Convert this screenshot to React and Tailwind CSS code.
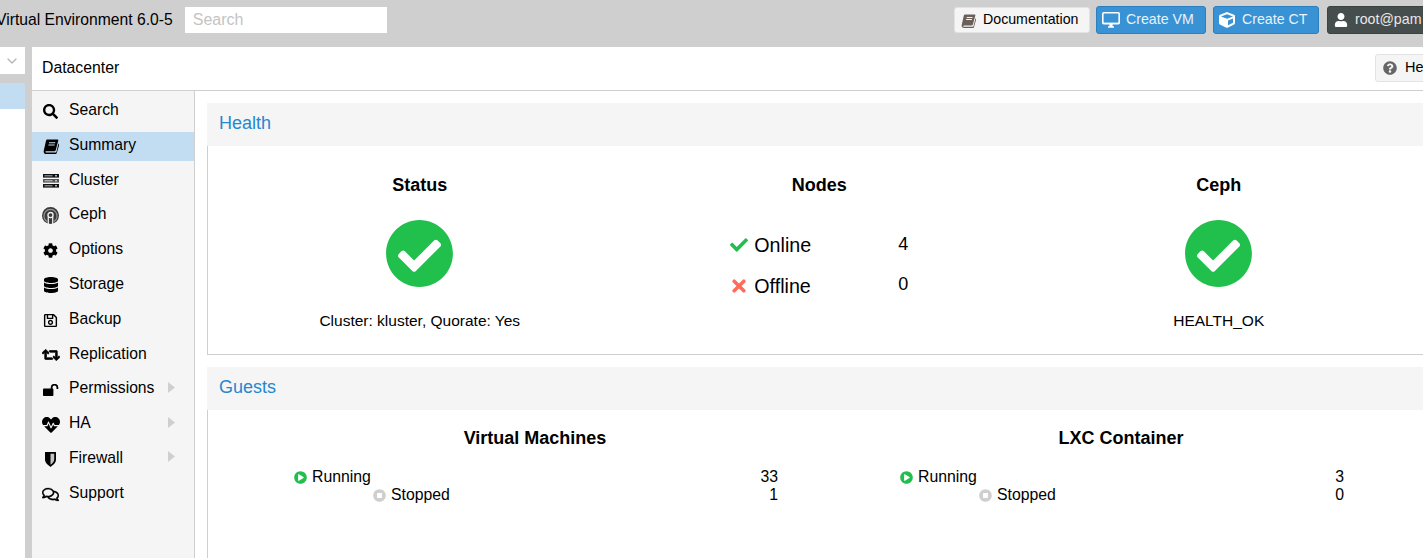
import { ChevronDown } from "lucide-react";
import {
  FaSearch,
  FaCog,
  FaDatabase,
  FaRegSave,
  FaRetweet,
  FaHeartbeat,
  FaRegComments,
  FaCheckCircle,
  FaCheck,
  FaPlayCircle,
  FaStopCircle,
  FaCube,
  FaUser,
  FaQuestionCircle,
} from "react-icons/fa";

function BookIcon({ className, page = "#f5f5f5" }) {
  return (
    <svg viewBox="0 0 16 16" className={className} fill="currentColor">
      <path d="M4.2 1.5h10.3c.7 0 1 .5.8 1.1l-2.6 9.6c-.2.7-.7 1-1.4 1H3.2c-.6 0-.9.4-.8.8.1.4.5.6 1 .6h9.3c.3 0 .5-.2.6-.4l2.2-8.6.5.4c.2.2.2.5.2.8l-2.4 8.3c-.2.6-.7.9-1.3.9H3.2C1.8 16 .6 15 .7 13.5c0-.3 0-.6.1-.9L3 2.7c.2-.7.6-1.2 1.2-1.2z" />
      <path d="M6.2 4.2h6.2l-.3 1H5.9zM5.6 6.4h6.2l-.3 1H5.3z" fill={page} />
    </svg>
  );
}

function ClusterIcon({ className }) {
  return (
    <svg viewBox="0 0 16 14" className={className}>
      <rect x="0" y="0" width="16" height="3.6" fill="#111" />
      <rect x="0" y="5" width="16" height="3.6" fill="#555" />
      <rect x="0" y="10" width="16" height="3.6" fill="#111" />
      <rect x="1.5" y="1.2" width="8" height="1.2" fill="#999" />
      <rect x="1.5" y="6.2" width="8" height="1.2" fill="#bbb" />
      <rect x="1.5" y="11.2" width="8" height="1.2" fill="#999" />
      <rect x="12" y="1.2" width="2" height="1.2" fill="#ddd" />
      <rect x="12" y="6.2" width="2" height="1.2" fill="#ddd" />
      <rect x="12" y="11.2" width="2" height="1.2" fill="#ddd" />
    </svg>
  );
}

function CephIcon({ className }) {
  return (
    <svg viewBox="0 0 16 16" className={className} fill="none">
      <circle cx="8" cy="8" r="8" fill="#3a3a3a" />
      <path d="M4.6 13.6A6.2 6.2 0 1 1 11.4 13.6" stroke="#9a9a9a" strokeWidth="1" />
      <circle cx="8" cy="7.6" r="2.4" stroke="#f0f0f0" strokeWidth="1.3" />
      <path d="M5.9 9.5V16M10.1 9.5V16" stroke="#f0f0f0" strokeWidth="1.2" />
    </svg>
  );
}

function DesktopIcon({ className }) {
  return (
    <svg viewBox="0 0 18 16" className={className} fill="none">
      <rect x="0.8" y="0.8" width="16.4" height="11" rx="1" stroke="white" strokeWidth="1.6" />
      <path d="M0.8 10.6h16.4v1.2H0.8z" fill="white" />
      <path d="M6 14.2h6v1.6H6z M7.4 12h3.2v2.4H7.4z" fill="white" />
    </svg>
  );
}

function UnlockIcon({ className }) {
  return (
    <svg viewBox="0 0 16 12" className={className} fill="none">
      <rect x="0" y="4.6" width="10.4" height="7.4" rx="0.8" fill="black" />
      <path d="M8.6 5V3.6a2.9 2.9 0 0 1 5.8 0V5" stroke="black" strokeWidth="1.8" />
    </svg>
  );
}

function ShieldIcon({ className }) {
  return (
    <svg viewBox="0 0 11 15" className={className}>
      <path d="M.4 0h10.2c.2 0 .4.2.4.4v7.2c0 3.4-3.4 5.9-5.5 7.4C3.4 13.5 0 11 0 7.6V.4C0 .2.2 0 .4 0z" fill="black" />
      <path d="M5.5 1.8h3.7v5.8c0 2.3-2 4-3.7 5.2z" fill="#c4c4c4" />
    </svg>
  );
}

function CrossIcon({ className }) {
  return (
    <svg viewBox="0 0 14 14" className={className} fill="none">
      <path d="M2.2 2.2l9.6 9.6M11.8 2.2l-9.6 9.6" stroke="#ff6c59" strokeWidth="3.6" strokeLinecap="round" />
    </svg>
  );
}

function Caret() {
  return (
    <svg viewBox="0 0 7 11" className="h-[11px] w-[7px]">
      <polygon points="0,0 7,5.5 0,11" fill="#cfcfcf" />
    </svg>
  );
}

const navItems = [
  { label: "Search", icon: <FaSearch className="size-[15px]" /> },
  { label: "Summary", icon: <BookIcon className="size-[16px]" page="#c2ddf2" />, active: true },
  { label: "Cluster", icon: <ClusterIcon className="h-[14px] w-[16px]" /> },
  { label: "Ceph", icon: <CephIcon className="size-[17px]" /> },
  { label: "Options", icon: <FaCog className="size-[15px]" /> },
  { label: "Storage", icon: <FaDatabase className="h-[16px] w-[14px]" /> },
  { label: "Backup", icon: <FaRegSave className="size-[15px]" /> },
  { label: "Replication", icon: <FaRetweet className="size-[18px]" stroke="currentColor" strokeWidth="24" /> },
  { label: "Permissions", icon: <UnlockIcon className="h-[12px] w-[16px]" />, more: true },
  { label: "HA", icon: <FaHeartbeat className="size-[18px]" />, more: true },
  { label: "Firewall", icon: <ShieldIcon className="h-[15px] w-[11px]" />, more: true },
  { label: "Support", icon: <FaRegComments className="size-[17px]" stroke="currentColor" strokeWidth="8" /> },
];

function NavRow({ item }) {
  return (
    <div className={`relative flex h-[29px] items-center ${item.active ? "bg-[#c2ddf2]" : ""}`}>
      <span className="flex w-[37px] shrink-0 justify-center text-black">{item.icon}</span>
      <span className="pb-[3px] text-[15.7px] leading-[20px] text-black">{item.label}</span>
      {item.more && (
        <span className="ml-auto mr-[19px] flex pb-[5px]">
          <Caret />
        </span>
      )}
    </div>
  );
}

function PanelHeader({ title }) {
  return (
    <div className="flex h-[43px] items-center bg-[#f5f5f5] pb-[2px] pl-[12px] text-[18px] text-[#2687cf]">{title}</div>
  );
}

function GuestRow({ label, count, icon, indent }) {
  return (
    <div className="flex h-[18px] items-center text-[15.8px] leading-[18px] text-black">
      <span className={`flex items-center gap-[5px] ${indent ? "pl-[79px]" : ""}`}>
        {icon}
        {label}
      </span>
      <span className="ml-auto">{count}</span>
    </div>
  );
}

function GuestColumn({ title, rowClass, running, stopped }) {
  return (
    <div className="w-[586px] shrink-0">
      <h3 className="text-center text-[18px] font-bold leading-[22px] text-black">{title}</h3>
      <div className={`mt-[19px] ${rowClass}`}>
        <GuestRow label="Running" count={running} icon={<FaPlayCircle className="size-[13px] text-[#21bf4b]" />} />
        <GuestRow label="Stopped" count={stopped} indent icon={<FaStopCircle className="size-[13px] text-[#cfcfcf]" />} />
      </div>
    </div>
  );
}

export default function App() {
  return (
    <div className="flex h-[558px] w-[1423px] flex-col overflow-hidden bg-[#cfcfcf] font-['Liberation_Sans',Arial,sans-serif]">
      {/* top bar */}
      <div className="flex h-[47px] shrink-0 items-start">
        <span className="ml-[-4px] mt-[10px] whitespace-nowrap text-[15.7px] leading-[20px] text-black">
          Virtual Environment 6.0-5
        </span>
        <div className="ml-[12px] mt-[7px] flex h-[26px] w-[202px] items-center bg-white pl-[8px] text-[16px] text-[#c4c4c4]">
          Search
        </div>
        <div className="ml-auto mr-[-30px] mt-[6px] flex items-start">
          <button className="mt-[1px] flex h-[26px] w-[136px] items-center rounded-[3px] border border-[#e3e3e3] bg-[#f5f5f5] pl-[6px] text-[14.2px] text-black">
            <BookIcon className="size-[15px] text-[#6b5f5a]" />
            <span className="ml-[7px]">Documentation</span>
          </button>
          <button className="ml-[6px] flex h-[28px] w-[110px] items-center rounded-[3px] border border-[#2a7fc0] bg-[#3892d4] pl-[5px] text-[14.2px] text-[#e8f2fa]">
            <DesktopIcon className="h-[16px] w-[18px]" />
            <span className="ml-[6px]">Create VM</span>
          </button>
          <button className="ml-[7px] flex h-[28px] w-[106px] items-center rounded-[3px] border border-[#2a7fc0] bg-[#3892d4] pl-[5px] text-[14.2px] text-[#e8f2fa]">
            <FaCube className="size-[16px] text-white" />
            <span className="ml-[7px]">Create CT</span>
          </button>
          <button className="ml-[8px] flex h-[28px] w-[126px] items-center rounded-[3px] border border-[#3c4242] bg-[#464d4d] pl-[6px] text-[14.2px] text-[#e8e8e8]">
            <FaUser className="size-[14px] text-white" />
            <span className="ml-[7px]">root@pam</span>
          </button>
        </div>
      </div>

      <div className="flex min-h-0 flex-1">
        {/* resource tree */}
        <div className="flex w-[25px] shrink-0 flex-col">
          <div className="flex h-[27px] items-center justify-end bg-white pr-[5px]">
            <ChevronDown className="size-[16px] text-[#b5b5b5]" />
          </div>
          <div className="mt-[9px] flex-1 bg-white">
            <div className="h-[26px] bg-[#c2ddf2]" />
          </div>
        </div>

        {/* main panel */}
        <div className="ml-[7px] flex min-w-0 flex-1 flex-col bg-white">
          <div className="flex h-[44px] shrink-0 items-center border-b border-[#cfcfcf] pl-[10px] text-[15.8px] text-black">
            <span className="pb-[2px]">Datacenter</span>
            <button className="ml-auto mr-[-40px] mt-[-2px] flex h-[28px] w-[88px] items-center rounded-[3px] border border-[#e3e3e3] bg-[#f5f5f5] pl-[7px] text-[14.5px]">
              <FaQuestionCircle className="size-[14px] text-[#666]" />
              <span className="ml-[8px]">Help</span>
            </button>
          </div>

          <div className="flex min-h-0 flex-1">
            <div className="flex w-[163px] shrink-0 flex-col gap-[5.8px] border-r border-[#cfcfcf] bg-[#f5f5f5] pt-[6px]">
              {navItems.map((item) => (
                <NavRow key={item.label} item={item} />
              ))}
            </div>

            <div className="min-w-0 flex-1 pl-[12px] pt-[12px]">
              <div className="w-[1240px]">
                <PanelHeader title="Health" />
                <div className="flex h-[209px] border border-t-0 border-[#cfcfcf] pl-[12px] pt-[28px]">
                  <div className="flex w-[399.5px] flex-col items-center">
                    <h3 className="text-[18px] font-bold leading-[22px] text-black">Status</h3>
                    <FaCheckCircle className="mt-[23px] size-[69px] text-[#21bf4b]" />
                    <p className="mt-[23px] text-[15.5px] leading-[20px] text-black">Cluster: kluster, Quorate: Yes</p>
                  </div>
                  <div className="flex w-[399.5px] flex-col items-center">
                    <h3 className="text-[18px] font-bold leading-[22px] text-black">Nodes</h3>
                    <div className="mt-[38px] w-[178px] text-[19.7px] leading-[22px] text-black">
                      <div className="flex h-[22px] items-center">
                        <FaCheck className="size-[18px] text-[#21bf4b]" />
                        <span className="ml-[6px]">Online</span>
                        <span className="ml-auto -translate-y-[1px] text-[18px]">4</span>
                      </div>
                      <div className="mt-[19px] flex h-[22px] items-center">
                        <span className="flex w-[18px] justify-center">
                          <CrossIcon className="size-[14px]" />
                        </span>
                        <span className="ml-[6px]">Offline</span>
                        <span className="ml-auto -translate-y-[2px] text-[18px]">0</span>
                      </div>
                    </div>
                  </div>
                  <div className="flex w-[399.5px] flex-col items-center">
                    <h3 className="text-[18px] font-bold leading-[22px] text-black">Ceph</h3>
                    <FaCheckCircle className="mt-[23px] size-[69px] text-[#21bf4b]" />
                    <p className="mt-[23px] text-[15.5px] leading-[20px] text-black">HEALTH_OK</p>
                  </div>
                </div>

                <div className="mt-[12px]">
                  <PanelHeader title="Guests" />
                  <div className="flex h-[200px] border border-t-0 border-[#cfcfcf] pl-[34px] pt-[17px]">
                    <GuestColumn title="Virtual Machines" rowClass="ml-[52px] w-[484px]" running="33" stopped="1" />
                    <GuestColumn title="LXC Container" rowClass="ml-[72px] w-[444px]" running="3" stopped="0" />
                  </div>
                </div>
              </div>
            </div>
          </div>
        </div>
      </div>
    </div>
  );
}
